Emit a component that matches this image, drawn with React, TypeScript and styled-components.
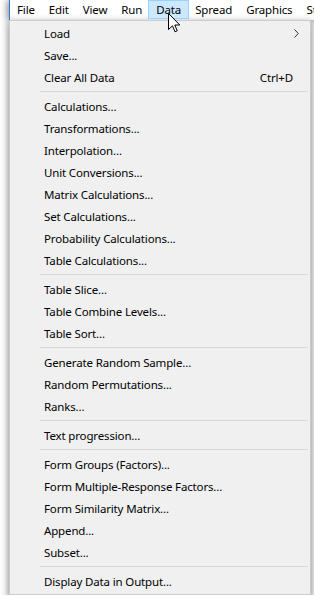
import React from "react";
import styled, { createGlobalStyle } from "styled-components";

const GlobalStyle = createGlobalStyle`
  html, body {
    margin: 0;
    padding: 0;
    background: #ffffff;
    overflow: hidden;
  }
  body {
    font-family: "Noto Sans", "Segoe UI", sans-serif;
    font-size: 11.5px;
    letter-spacing: -0.15px;
    color: #000;
  }
`;

// Whole captured window, offset so its shadow shows on the left
const Window = styled.div`
  position: relative;
  margin-left: 9px;
  width: 320px;
`;

// Top menu strip
const MenuBar = styled.div`
  display: flex;
  height: 20px;
  background: #ffffff;
  border-left: 1px solid #2b7bd6;
  box-shadow: -2px 0 7px rgba(0, 0, 0, 0.45);
  white-space: nowrap;
`;

const BarItem = styled.div<{ $active?: boolean }>`
  box-sizing: border-box;
  height: 19px;
  line-height: 17px;
  padding: 0 7px;
  border: 1px solid ${(p) => (p.$active ? "#99d1ff" : "transparent")};
  background: ${(p) => (p.$active ? "#cce8ff" : "transparent")};
  margin: 0 -1px;
`;

// Dropped-down Data menu
const Dropdown = styled.div`
  box-sizing: border-box;
  width: 302px;
  padding: 1px 2px 2px;
  background: #f0f0f0;
  border: 1px solid #cccccc;
  box-shadow: 0 3px 7px 1px rgba(0, 0, 0, 0.45);
`;

const Item = styled.div`
  display: flex;
  align-items: center;
  height: 22px;
  padding: 0 15px 0 32px;
`;

const Label = styled.span`
  flex: 1;
`;

const Shortcut = styled.span`
  color: #000;
`;

const Chevron = styled.svg`
  margin-right: -6px;
`;

const Separator = styled.div`
  height: 1px;
  margin: 3px 0 3px 28px;
  background: #d7d7d7;
`;

// Mouse pointer lying over the Data tab
const Pointer = styled.svg`
  position: absolute;
  left: 159px;
  top: 13px;
`;

type Entry = { label: string; shortcut?: string; sub?: boolean } | "sep";

const entries: Entry[] = [
  { label: "Load", sub: true },
  { label: "Save..." },
  { label: "Clear All Data", shortcut: "Ctrl+D" },
  "sep",
  { label: "Calculations..." },
  { label: "Transformations..." },
  { label: "Interpolation..." },
  { label: "Unit Conversions..." },
  { label: "Matrix Calculations..." },
  { label: "Set Calculations..." },
  { label: "Probability Calculations..." },
  { label: "Table Calculations..." },
  "sep",
  { label: "Table Slice..." },
  { label: "Table Combine Levels..." },
  { label: "Table Sort..." },
  "sep",
  { label: "Generate Random Sample..." },
  { label: "Random Permutations..." },
  { label: "Ranks..." },
  "sep",
  { label: "Text progression..." },
  "sep",
  { label: "Form Groups (Factors)..." },
  { label: "Form Multiple-Response Factors..." },
  { label: "Form Similarity Matrix..." },
  { label: "Append..." },
  { label: "Subset..." },
  "sep",
  { label: "Display Data in Output..." },
];

const menus = ["File", "Edit", "View", "Run", "Data", "Spread", "Graphics", "Stats"];

const App = () => (
  <>
    <GlobalStyle />
    <Window>
      <MenuBar>
        {menus.map((m) => (
          <BarItem key={m} $active={m === "Data"}>
            {m}
          </BarItem>
        ))}
      </MenuBar>
      <Dropdown>
        {entries.map((e, i) =>
          e === "sep" ? (
            <Separator key={i} />
          ) : (
            <Item key={i}>
              <Label>{e.label}</Label>
              {e.shortcut && <Shortcut>{e.shortcut}</Shortcut>}
              {e.sub && (
                <Chevron width="5" height="9" viewBox="0 0 5 9">
                  <path d="M0.5 0.5 L4.3 4.5 L0.5 8.5" fill="none" stroke="#333" strokeWidth="1" />
                </Chevron>
              )}
            </Item>
          )
        )}
      </Dropdown>
      <Pointer width="13" height="21" viewBox="0 0 13 21">
        <path
          d="M0.5 0.5 L0.5 16.5 L4.5 12.8 L7 18.8 L9.2 17.8 L6.8 12 L11.8 12 Z"
          fill="#fff"
          stroke="#000"
          strokeWidth="1"
          strokeLinejoin="miter"
        />
      </Pointer>
    </Window>
  </>
);

export default App;
